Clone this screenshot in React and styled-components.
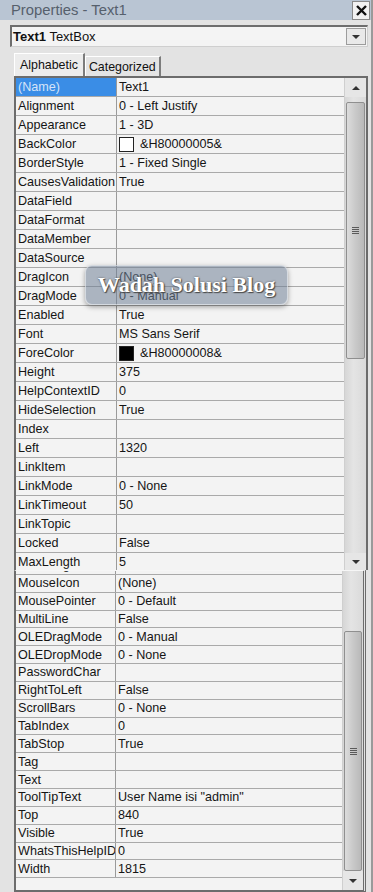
import React from 'react';
import styled, { createGlobalStyle } from 'styled-components';

const GlobalStyle = createGlobalStyle`
  html, body { margin: 0; padding: 0; background: #e4e4e4; }
  body { font-family: 'Liberation Sans', Arial, sans-serif; }
`;

const topRows = [
  ['(Name)', 'Text1', null, true],
  ['Alignment', '0 - Left Justify'],
  ['Appearance', '1 - 3D'],
  ['BackColor', '&H80000005&', 'white'],
  ['BorderStyle', '1 - Fixed Single'],
  ['CausesValidation', 'True'],
  ['DataField', ''],
  ['DataFormat', ''],
  ['DataMember', ''],
  ['DataSource', ''],
  ['DragIcon', '(None)'],
  ['DragMode', '0 - Manual'],
  ['Enabled', 'True'],
  ['Font', 'MS Sans Serif'],
  ['ForeColor', '&H80000008&', 'black'],
  ['Height', '375'],
  ['HelpContextID', '0'],
  ['HideSelection', 'True'],
  ['Index', ''],
  ['Left', '1320'],
  ['LinkItem', ''],
  ['LinkMode', '0 - None'],
  ['LinkTimeout', '50'],
  ['LinkTopic', ''],
  ['Locked', 'False'],
  ['MaxLength', '5'],
];

const bottomRows = [
  ['MaxLength', '5'],
  ['MouseIcon', '(None)'],
  ['MousePointer', '0 - Default'],
  ['MultiLine', 'False'],
  ['OLEDragMode', '0 - Manual'],
  ['OLEDropMode', '0 - None'],
  ['PasswordChar', ''],
  ['RightToLeft', 'False'],
  ['ScrollBars', '0 - None'],
  ['TabIndex', '0'],
  ['TabStop', 'True'],
  ['Tag', ''],
  ['Text', ''],
  ['ToolTipText', 'User Name isi "admin"'],
  ['Top', '840'],
  ['Visible', 'True'],
  ['WhatsThisHelpID', '0'],
  ['Width', '1815'],
];

const Properties = () => {
  return (
    <Window>
      <GlobalStyle />
      <TitleBar>
        <Title>Properties - Text1</Title>
        <CloseBtn>
          <svg width="11" height="11" viewBox="0 0 11 11">
            <path d="M1 1 L10 10 M10 1 L1 10" stroke="#111" strokeWidth="2.4" />
          </svg>
        </CloseBtn>
      </TitleBar>

      <Combo>
        <ComboText><b>Text1</b> TextBox</ComboText>
        <DropBtn><Arrow down /></DropBtn>
      </Combo>

      <Tabs>
        <Tab active>Alphabetic</Tab>
        <Tab>Categorized</Tab>
      </Tabs>

      <TopGrid>
        <RowList>
          {topRows.map(([name, value, swatch, sel]) => (
            <Row key={name} h={19} nameW={101}>
              <NameCell selected={sel}>{name}</NameCell>
              <ValueCell>
                {swatch && <Swatch color={swatch} />}
                {value}
              </ValueCell>
            </Row>
          ))}
        </RowList>
        <ScrollBar w={21}>
          <ScrollBtn h={19}><Arrow /></ScrollBtn>
          <Track>
            <Thumb top={5} h={257}><Grip /></Thumb>
          </Track>
          <ScrollBtn h={17}><Arrow down /></ScrollBtn>
        </ScrollBar>
      </TopGrid>

      <BottomGrid>
        <RowList>
          <Clip>
            {bottomRows.map(([name, value]) => (
              <Row key={name} h={17.85} nameW={100}>
                <NameCell>{name}</NameCell>
                <ValueCell>{value}</ValueCell>
              </Row>
            ))}
          </Clip>
        </RowList>
        <ScrollBar w={20}>
          <Track>
            <Thumb top={60} h={240}><Grip /></Thumb>
          </Track>
          <ScrollBtn h={19}><Arrow down /></ScrollBtn>
        </ScrollBar>
      </BottomGrid>

      <Watermark>Wadah Solusi Blog</Watermark>
    </Window>
  );
};

const Window = styled.div`
  position: relative;
  width: 373px;
  height: 892px;
  overflow: hidden;
  background: #e3e3e3;
  display: flex;
  flex-direction: column;
  border-right: 2px solid #9a9a9a;
  box-sizing: border-box;
`;

const TitleBar = styled.div`
  height: 20px;
  background: #b9c5d3;
  display: flex;
  align-items: center;
  justify-content: space-between;
  padding-left: 11px;
`;

const Title = styled.span`
  color: #56606c;
  font-size: 14.8px;
`;

const CloseBtn = styled.div`
  width: 16px;
  height: 17px;
  margin-right: 1px;
  border: 1px solid #8a8a8a;
  background: #f2f2f2;
  display: flex;
  align-items: center;
  justify-content: center;
`;

const Combo = styled.div`
  margin: 5px 3px 0 10px;
  height: 19px;
  border-top: 2px solid #6e6e6e;
  border-left: 2px solid #6e6e6e;
  border-right: 1px solid #cfcfcf;
  border-bottom: 1px solid #cfcfcf;
  background: #f4f4f4;
  display: flex;
  align-items: center;
  justify-content: space-between;
`;

const ComboText = styled.span`
  font-size: 13px;
  color: #111;
  padding-left: 1px;
  b { font-weight: bold; }
`;

const DropBtn = styled.div`
  width: 18px;
  height: 15px;
  margin-right: 1px;
  border: 1px solid #9c9c9c;
  background: #e9e9e9;
  display: flex;
  align-items: center;
  justify-content: center;
`;

const Arrow = styled.span`
  width: 0;
  height: 0;
  border-left: 4px solid transparent;
  border-right: 4px solid transparent;
  ${p => p.down ? 'border-top: 4px solid #333;' : 'border-bottom: 4px solid #333;'}
`;

const Tabs = styled.div`
  display: flex;
  align-items: flex-end;
  height: 24px;
  margin: 5px 0 0 14px;
`;

const Tab = styled.div`
  height: ${p => p.active ? 23 : 20}px;
  padding: 0 ${p => p.active ? 5 : 3}px;
  box-sizing: border-box;
  display: flex;
  align-items: center;
  font-size: 12.4px;
  color: #111;
  background: ${p => p.active ? '#ececec' : '#e4e4e4'};
  border-top: 1px solid #ffffff;
  border-left: 1px solid #ffffff;
  border-right: 2px solid #7c7c7c;
`;

const TopGrid = styled.div`
  margin: 0 3px 0 14px;
  height: 494px;
  flex-shrink: 0;
  border: 2px solid #6c6c6c;
  border-bottom: none;
  display: flex;
  overflow: hidden;
  box-sizing: border-box;
`;

const BottomGrid = styled.div`
  margin: 0 5px 0 14px;
  flex: 1;
  border: 2px solid #6c6c6c;
  border-top: 1px solid #f6f6f6;
  border-right: 3px double #6c6c6c;
  display: flex;
  overflow: hidden;
  box-sizing: border-box;
`;

const RowList = styled.div`
  flex: 1;
  overflow: hidden;
  background: #f3f3f3;
`;

const Clip = styled.div`
  margin-top: -14px;
`;

const Row = styled.div`
  display: grid;
  grid-template-columns: ${p => p.nameW}px 1fr;
  height: ${p => p.h}px;
  border-bottom: 1px solid #a9a9a9;
  box-sizing: border-box;
  font-size: 12.6px;
  color: #151515;
  background: #f3f3f3;
`;

const NameCell = styled.div`
  display: flex;
  align-items: center;
  padding-left: 2px;
  border-right: 1px solid #9a9a9a;
  white-space: nowrap;
  overflow: hidden;
  background: ${p => p.selected ? '#3a8de6' : 'transparent'};
  color: ${p => p.selected ? '#d6e4f8' : 'inherit'};
`;

const ValueCell = styled.div`
  display: flex;
  align-items: center;
  gap: 6px;
  padding-left: 2px;
  white-space: nowrap;
`;

const Swatch = styled.span`
  width: 13px;
  height: 13px;
  border: 1px solid #222;
  background: ${p => p.color};
`;

const ScrollBar = styled.div`
  width: ${p => p.w}px;
  display: flex;
  flex-direction: column;
  background: #e0e0e0;
  border-left: 1px solid #cfcfcf;
`;

const ScrollBtn = styled.div`
  height: ${p => p.h}px;
  display: flex;
  align-items: center;
  justify-content: center;
  background: #e6e6e6;
`;

const Track = styled.div`
  flex: 1;
  position: relative;
  background: linear-gradient(to right, #d6d6d6, #e4e4e4 40%, #dadada);
`;

const Thumb = styled.div`
  position: absolute;
  top: ${p => p.top}px;
  left: 1px;
  right: 1px;
  height: ${p => p.h}px;
  border: 1px solid #8f8f8f;
  border-radius: 2px;
  box-sizing: border-box;
  background: linear-gradient(to right, #dcdcdc, #c9c9c9 50%, #b9b9b9);
  display: flex;
  align-items: center;
  justify-content: center;
`;

const Grip = styled.div`
  width: 7px;
  height: 7px;
  background: repeating-linear-gradient(to bottom, #5a5a5a 0 1px, transparent 1px 2px);
`;

const Watermark = styled.div`
  position: absolute;
  left: 85px;
  top: 265px;
  width: 203px;
  height: 40px;
  border-radius: 7px;
  background: rgba(112, 128, 150, 0.55);
  border: 1px solid rgba(255, 255, 255, 0.5);
  box-shadow: 0 2px 5px rgba(0, 0, 0, 0.35);
  display: flex;
  align-items: center;
  justify-content: center;
  font-family: 'Liberation Serif', 'Times New Roman', serif;
  font-weight: bold;
  font-size: 22px;
  color: #ffffff;
  text-shadow: 0 0 2px #555, 1px 1px 1px #444;
  box-sizing: border-box;
`;

export default Properties;
